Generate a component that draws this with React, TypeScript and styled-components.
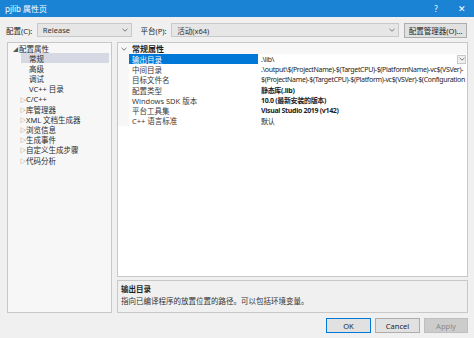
import React from 'react';
import styled, { createGlobalStyle } from 'styled-components';

const GlobalStyle = createGlobalStyle`
  html, body {
    margin: 0;
    padding: 0;
    background: #f0f0f0;
  }
  * {
    box-sizing: border-box;
  }
`;

const FONT = `"Segoe UI", "Noto Sans", "Noto Sans CJK SC", sans-serif`;

const treeItems = [
  { label: '配置属性', level: 0, mark: '◢' },
  { label: '常规', level: 1, selected: true },
  { label: '高级', level: 1 },
  { label: '调试', level: 1 },
  { label: 'VC++ 目录', level: 1 },
  { label: 'C/C++', level: 1, mark: '▷' },
  { label: '库管理器', level: 1, mark: '▷' },
  { label: 'XML 文档生成器', level: 1, mark: '▷' },
  { label: '浏览信息', level: 1, mark: '▷' },
  { label: '生成事件', level: 1, mark: '▷' },
  { label: '自定义生成步骤', level: 1, mark: '▷' },
  { label: '代码分析', level: 1, mark: '▷' }
];

// values cut where the grid edge cuts them in the dialog
const props = [
  { name: '输出目录', value: '.\\lib\\', selected: true },
  { name: '中间目录', value: '.\\output\\$(ProjectName)-$(TargetCPU)-$(PlatformName)-vc$(VSVer)-' },
  { name: '目标文件名', value: '$(ProjectName)-$(TargetCPU)-$(Platform)-vc$(VSVer)-$(Configuration' },
  { name: '配置类型', value: '静态库(.lib)', bold: true },
  { name: 'Windows SDK 版本', value: '10.0 (最新安装的版本)', bold: true },
  { name: '平台工具集', value: 'Visual Studio 2019 (v142)', bold: true },
  { name: 'C++ 语言标准', value: '默认' }
];

const Chevron = () => (
  <svg width="6" height="4" viewBox="0 0 6 4">
    <path d="M0.5 0.8 L3 3.2 L5.5 0.8" fill="none" stroke="#6d6d6d" strokeWidth="0.9" />
  </svg>
);

const App = () => {
  return (
    <Window>
      <GlobalStyle />
      <TitleBar>
        <Title>pjlib 属性页</Title>
        <TitleIcons>
          <TitleIcon>?</TitleIcon>
          <TitleIcon $big>✕</TitleIcon>
        </TitleIcons>
      </TitleBar>

      <ConfigRow>
        <Label>配置(C):</Label>
        <Combo $width={96}>
          <span>Release</span>
          <Chevron />
        </Combo>
        <Label $left={8}>平台(P):</Label>
        <Combo $width={229}>
          <span>活动(x64)</span>
          <Chevron />
        </Combo>
        <Button $width={63} $left={5}>配置管理器(O)...</Button>
      </ConfigRow>

      <Body>
        <TreePanel>
          {treeItems.map((it) => (
            <TreeRow key={it.label} $level={it.level} $mark={!!it.mark} $selected={!!it.selected}>
              {it.mark && <TreeMark $small={it.mark === '◢'}>{it.mark}</TreeMark>}
              <span>{it.label}</span>
            </TreeRow>
          ))}
        </TreePanel>

        <RightColumn>
          <Grid>
            <HeaderRow>
              <Gutter>
                <Chevron />
              </Gutter>
              <HeaderText>常规属性</HeaderText>
            </HeaderRow>
            {props.map((p) => (
              <PropRow key={p.name}>
                <Gutter />
                <PropName $selected={!!p.selected}>{p.name}</PropName>
                <PropValue $bold={!!p.bold}>
                  <ValueText>{p.value}</ValueText>
                  {p.selected && (
                    <DropButton>
                      <Chevron />
                    </DropButton>
                  )}
                </PropValue>
              </PropRow>
            ))}
          </Grid>
          <DescPanel>
            <DescTitle>输出目录</DescTitle>
            <DescText>指向已编译程序的放置位置的路径。可以包括环境变量。</DescText>
          </DescPanel>
        </RightColumn>
      </Body>

      <Footer>
        <Button $width={45} $primary>OK</Button>
        <Button $width={45}>Cancel</Button>
        <Button $width={44} $disabled>Apply</Button>
      </Footer>
    </Window>
  );
};

const Window = styled.div`
  width: 474px;
  height: 338px;
  display: flex;
  flex-direction: column;
  background: #f0f0f0;
  font-family: ${FONT};
  font-size: 7.5px;
  color: #1e1e1e;
  overflow: hidden;
`;

const TitleBar = styled.div`
  height: 17px;
  flex: none;
  background: #1a83d3;
  display: flex;
  align-items: center;
  justify-content: space-between;
  padding: 0 8px 0 5px;
  color: #ffffff;
`;

const Title = styled.span`
  font-size: 8px;
`;

const TitleIcons = styled.div`
  display: flex;
  align-items: center;
  gap: 18px;
`;

const TitleIcon = styled.span<{ $big?: boolean }>`
  font-size: ${({ $big }) => ($big ? '9px' : '8px')};
  width: 8px;
  text-align: center;
`;

const ConfigRow = styled.div`
  height: 25px;
  flex: none;
  display: flex;
  align-items: center;
  padding: 1px 7px 0 6px;
`;

const Label = styled.span<{ $left?: number }>`
  margin-left: ${({ $left }) => $left || 0}px;
  width: 31px;
  white-space: nowrap;
`;

const Combo = styled.div<{ $width: number }>`
  width: ${({ $width }) => $width}px;
  height: 14px;
  background: #e6e6e6;
  border: 1px solid #c9c9c9;
  display: flex;
  align-items: center;
  justify-content: space-between;
  padding: 0 3px 0 5px;
  color: #333;
`;

const Button = styled.div<{ $width: number; $left?: number; $primary?: boolean; $disabled?: boolean }>`
  width: ${({ $width }) => $width}px;
  margin-left: ${({ $left }) => $left || 0}px;
  height: 15px;
  display: flex;
  align-items: center;
  justify-content: center;
  white-space: nowrap;
  background: ${({ $disabled }) => ($disabled ? '#cccccc' : '#e1e1e1')};
  border: 1px solid
    ${({ $primary, $disabled }) => ($primary ? '#0078d7' : $disabled ? '#bfbfbf' : '#adadad')};
  color: ${({ $disabled }) => ($disabled ? '#8a8a8a' : '#1e1e1e')};
`;

const Body = styled.div`
  flex: 1;
  display: flex;
  gap: 5px;
  padding: 0 6px 0 7px;
  min-height: 0;
`;

const TreePanel = styled.div`
  width: 105px;
  flex: none;
  background: #f7f7f7;
  border: 1px solid #c8c8c8;
`;

const TreeRow = styled.div<{ $level: number; $mark: boolean; $selected: boolean }>`
  height: 10.2px;
  display: flex;
  align-items: center;
  margin-left: ${({ $level, $mark }) => ($level === 0 ? 3 : $mark ? 12 : 13)}px;
  margin-right: 2px;
  padding-left: ${({ $level, $mark }) => ($level === 1 && !$mark ? 8 : 0)}px;
  background: ${({ $selected }) => ($selected ? '#d6d9e4' : 'transparent')};
  color: #2b2b2b;
  white-space: nowrap;
`;

const TreeMark = styled.span<{ $small: boolean }>`
  width: ${({ $small }) => ($small ? 8 : 6)}px;
  font-size: ${({ $small }) => ($small ? '5px' : '6px')};
  color: #555;
  padding-left: ${({ $small }) => ($small ? 2 : 0)}px;
`;

const RightColumn = styled.div`
  flex: 1;
  min-width: 0;
  display: flex;
  flex-direction: column;
  gap: 3px;
`;

const Grid = styled.div`
  flex: 1;
  background: #ffffff;
  border: 1px solid #c8c8c8;
  overflow: hidden;
`;

const HeaderRow = styled.div`
  height: 11px;
  display: flex;
  align-items: center;
  background: #f7f7f7;
`;

const Gutter = styled.div`
  width: 11px;
  flex: none;
  height: 100%;
  display: flex;
  align-items: center;
  justify-content: center;
  background: #f7f7f7;
`;

const HeaderText = styled.span`
  font-weight: bold;
  font-size: 8px;
  padding-left: 3px;
`;

const PropRow = styled.div`
  height: 10.3px;
  display: flex;
  align-items: stretch;
`;

const PropName = styled.div<{ $selected: boolean }>`
  width: 129px;
  flex: none;
  display: flex;
  align-items: center;
  padding-left: 3px;
  background: ${({ $selected }) => ($selected ? '#0078d7' : '#ffffff')};
  color: ${({ $selected }) => ($selected ? '#ffffff' : '#3a3a3a')};
  white-space: nowrap;
`;

const PropValue = styled.div<{ $bold: boolean }>`
  flex: 1;
  min-width: 0;
  display: flex;
  align-items: center;
  padding-left: 3px;
  font-weight: ${({ $bold }) => ($bold ? 'bold' : 'normal')};
  color: #1e1e1e;
`;

const ValueText = styled.span`
  flex: 1;
  min-width: 0;
  white-space: nowrap;
  overflow: hidden;
  font-size: 7px;
  letter-spacing: -0.32px;
`;

const DropButton = styled.div`
  width: 9px;
  height: 9px;
  flex: none;
  margin-right: 1px;
  border: 1px solid #c8c8c8;
  background: #f0f0f0;
  display: flex;
  align-items: center;
  justify-content: center;
`;

const DescPanel = styled.div`
  height: 33px;
  flex: none;
  border: 1px solid #c8c8c8;
  background: #f0f0f0;
  padding: 2px 3px;
  display: flex;
  flex-direction: column;
  gap: 1px;
`;

const DescTitle = styled.span`
  font-weight: bold;
`;

const DescText = styled.span`
  color: #333;
`;

const Footer = styled.div`
  height: 25px;
  flex: none;
  display: flex;
  align-items: center;
  justify-content: flex-end;
  gap: 4px;
  padding: 0 6px 0 0;
`;

export default App;
